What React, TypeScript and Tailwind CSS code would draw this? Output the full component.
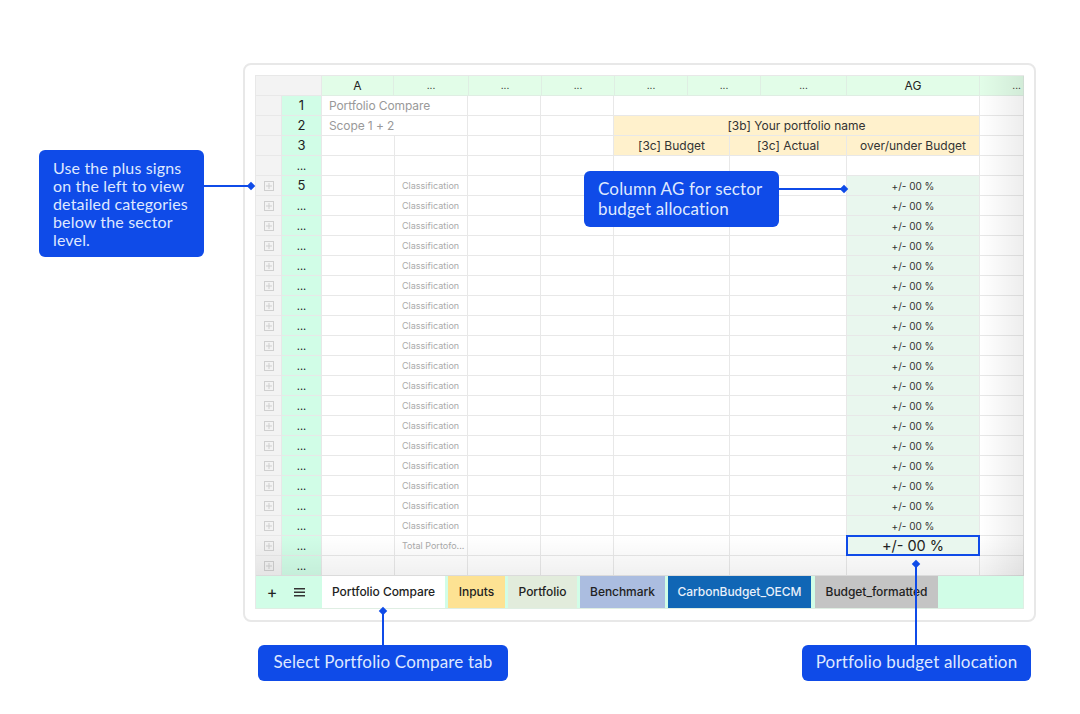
import React from 'react';

const line = 'border-r border-b border-[#e8e8e8]';
const grid = 'grid grid-cols-[26px_40px_73px_73px_73px_73px_116px_117px_133px_44px] auto-rows-[20px]';

// classification rows below the fixed header rows
const rows = Array.from({ length: 18 }, (_, i) => (i === 0 ? '5' : '...'));

function PlusBox() {
  return (
    <svg width="10" height="10" viewBox="0 0 10 10" fill="none" stroke="#cfcfcf" strokeWidth="1">
      <rect x="0.5" y="0.5" width="9" height="9" />
      <path d="M5 2v6M2 5h6" />
    </svg>
  );
}

function Gutter({ plus }: { plus?: boolean }) {
  return <div className={`${line} bg-[#f3f3f3] flex items-center justify-center`}>{plus && <PlusBox />}</div>;
}

function RowNum({ children }: { children: React.ReactNode }) {
  const size = children === '...' ? 'text-[11px] pt-[2px]' : 'text-[13px]';
  return <div className={`${line} bg-[#d1fde7] flex items-center justify-center text-[#222] ${size}`}>{children}</div>;
}

function Cell({ className = '', children }: { className?: string; children?: React.ReactNode }) {
  return <div className={`${line} flex items-center whitespace-nowrap overflow-hidden ${className}`}>{children}</div>;
}

function DataRow({ num, label, value }: { num: string; label: string; value?: boolean }) {
  return (
    <>
      <Gutter plus />
      <RowNum>{num}</RowNum>
      <Cell />
      <Cell className="pl-[7px] text-[9px] text-[#aaa]">{label}</Cell>
      <Cell />
      <Cell />
      <Cell />
      <Cell />
      <Cell className={value ? 'bg-[#e9f7ee] justify-center pt-[1px] text-[10px] text-[#333]' : ''}>{value && '+/- 00 %'}</Cell>
      <Cell />
    </>
  );
}

function Head({ children, className = '' }: { children?: React.ReactNode; className?: string }) {
  return (
    <div className={`border-r border-b border-[#dfeee3] bg-[#e2fde8] flex items-center justify-center text-[#222] ${className}`}>
      {children}
    </div>
  );
}

function Tab({ label, className }: { label: string; className: string }) {
  return <div className={`h-full flex items-center justify-center text-[12px] font-medium tracking-[-0.05px] ${className}`}>{label}</div>;
}

function Callout({ className, children }: { className: string; children: React.ReactNode }) {
  return (
    <div className={`absolute bg-[#0f4be8] rounded-[6px] text-[#dfe8ff] font-['Lato',sans-serif] tracking-[0.15px] ${className}`}>
      {children}
    </div>
  );
}

function Diamond({ className }: { className: string }) {
  return <div className={`absolute w-[6px] h-[6px] rotate-45 bg-[#0f4be8] ${className}`} />;
}

export default function App() {
  return (
    <div className="relative w-[1080px] h-[714px] bg-white overflow-hidden font-['Inter',sans-serif]">
      <div className="pt-[63px] pl-[243px]">
        <div className="w-[793px] h-[559px] border-2 border-[#e8e8e8] rounded-[8px] pt-[10px] pl-[10px]">
          <div className="relative w-[769px] border-l border-t border-[#e8e8e8]">
            {/* column letters */}
            <div className="flex h-[20px] text-[12px]">
              <div className="w-[66px] bg-[#f3f3f3] border-r border-b border-[#e8e8e8]" />
              <Head className="w-[72px]">A</Head>
              <Head className="w-[75px] text-[10px]">...</Head>
              <Head className="w-[73px] text-[10px]">...</Head>
              <Head className="w-[73px] text-[10px]">...</Head>
              <Head className="w-[73px] text-[10px]">...</Head>
              <Head className="w-[73px] text-[10px]">...</Head>
              <Head className="w-[86px] text-[10px]">...</Head>
              <Head className="w-[133px]">AG</Head>
              <Head className="w-[44px] text-[10px] !justify-end pr-[2px]">...</Head>
            </div>

            <div className={grid}>
              <Gutter />
              <RowNum>1</RowNum>
              <Cell className="col-span-2 pl-[7px] text-[12px] tracking-[-0.1px] text-[#999]">Portfolio Compare</Cell>
              <Cell />
              <Cell />
              <Cell className="col-span-3" />
              <Cell />

              <Gutter />
              <RowNum>2</RowNum>
              <Cell className="col-span-2 pl-[7px] text-[12px] tracking-[-0.1px] text-[#999]">Scope 1 + 2</Cell>
              <Cell />
              <Cell />
              <Cell className="col-span-3 bg-[#fff1cc] justify-center text-[12px] text-[#333]">[3b] Your portfolio name</Cell>
              <Cell />

              <Gutter />
              <RowNum>3</RowNum>
              <Cell />
              <Cell />
              <Cell />
              <Cell />
              <Cell className="bg-[#fff1cc] justify-center text-[12px] text-[#333]">[3c] Budget</Cell>
              <Cell className="bg-[#fff1cc] justify-center text-[12px] text-[#333]">[3c] Actual</Cell>
              <Cell className="bg-[#fff1cc] justify-center text-[12px] text-[#333]">over/under Budget</Cell>
              <Cell />

              <Gutter />
              <RowNum>...</RowNum>
              <Cell />
              <Cell />
              <Cell />
              <Cell />
              <Cell />
              <Cell />
              <Cell />
              <Cell />

              {rows.map((num, i) => (
                <DataRow key={i} num={num} label="Classification" value />
              ))}
              <DataRow num="..." label="Total Portofo..." />
              <DataRow num="..." label="" />
            </div>

            {/* tab bar */}
            <div className="flex h-[33px] bg-[#d1fde7] border-b border-r border-[#dfeee3] text-[#222]">
              <div className="w-[66px] flex items-center text-[16px]">
                <span className="w-[32px] text-center">+</span>
                <svg className="ml-[6px]" width="11" height="9" viewBox="0 0 11 9" fill="#333">
                  <rect width="11" height="1.5" />
                  <rect y="3.5" width="11" height="1.5" />
                  <rect y="7" width="11" height="1.5" />
                </svg>
              </div>
              <Tab label="Portfolio Compare" className="w-[123px] bg-white" />
              <Tab label="Inputs" className="ml-[3px] w-[57px] bg-[#fde293]" />
              <Tab label="Portfolio" className="ml-[3px] w-[69px] bg-[#e2ecdc]" />
              <Tab label="Benchmark" className="ml-[3px] w-[85px] bg-[#abbde0]" />
              <Tab label="CarbonBudget_OECM" className="ml-[3px] w-[143px] bg-[#1066b5] text-[#e8f0fa]" />
              <Tab label="Budget_formatted" className="ml-[4px] w-[123px] bg-[#c4c4c4]" />
            </div>

            {/* fade over the sheet edges */}
            <div className="absolute right-0 top-0 bottom-[33px] w-[44px] bg-gradient-to-r from-transparent to-[#00000012] pointer-events-none" />
            <div className="absolute left-0 right-0 bottom-[33px] h-[40px] bg-gradient-to-b from-transparent to-[#0000000f] pointer-events-none" />

            {/* selected cell */}
            <div className="absolute left-[590px] top-[459px] w-[134px] h-[21px] border-2 border-[#0f4be8] bg-[#e9f7ee] flex items-center justify-center text-[14.5px] text-[#222]">
              +/- 00 %
            </div>
          </div>
        </div>
      </div>

      {/* callouts and their leader lines */}
      <Callout className="left-[39px] top-[150px] w-[165px] h-[107px] pl-[14px] pt-[9px] text-[16px] leading-[18px]">
        Use the plus signs<br />on the left to view<br />detailed categories<br />below the sector<br />level.
      </Callout>
      <div className="absolute left-[204px] top-[185px] w-[46px] h-[2px] bg-[#0f4be8]" />
      <Diamond className="left-[248px] top-[183px]" />

      <Callout className="left-[584px] top-[171px] w-[195px] h-[56px] pl-[14px] pt-[8px] text-[17px] leading-[20px]">
        Column AG for sector<br />budget allocation
      </Callout>
      <div className="absolute left-[779px] top-[188px] w-[66px] h-[2px] bg-[#0f4be8]" />
      <Diamond className="left-[841px] top-[186px]" />

      <Callout className="left-[258px] top-[645px] w-[250px] h-[36px] pb-[2px] flex items-center justify-center text-[17px]">
        Select Portfolio Compare tab
      </Callout>
      <div className="absolute left-[382px] top-[612px] w-[2px] h-[33px] bg-[#0f4be8]" />
      <Diamond className="left-[380px] top-[608px]" />

      <Callout className="left-[802px] top-[645px] w-[229px] h-[36px] pb-[2px] flex items-center justify-center text-[17px]">
        Portfolio budget allocation
      </Callout>
      <div className="absolute left-[915px] top-[564px] w-[2px] h-[81px] bg-[#0f4be8]" />
      <Diamond className="left-[913px] top-[561px]" />
    </div>
  );
}
